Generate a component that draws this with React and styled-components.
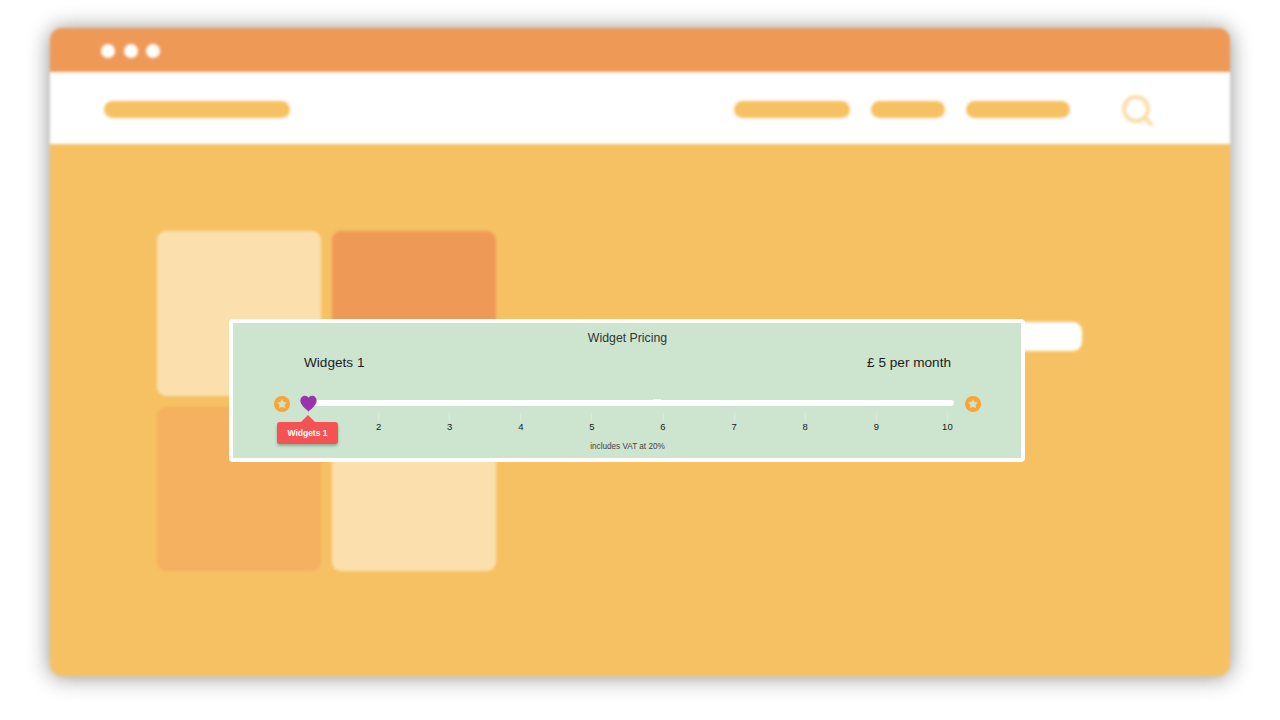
import React from 'react';
import styled, { createGlobalStyle } from 'styled-components';

const GlobalStyle = createGlobalStyle`
  html, body {
    margin: 0;
    padding: 0;
    background: #fff;
    font-family: "Liberation Sans", Arial, sans-serif;
  }
`;

const Stage = styled.div`
  position: relative;
  width: 1280px;
  height: 720px;
  padding: 28px 50px 44px;
  box-sizing: border-box;
  overflow: hidden;
`;

const BrowserMock = styled.div`
  display: flex;
  flex-direction: column;
  height: 100%;
  border-radius: 12px;
  overflow: hidden;
  background: #f6c162;
  box-shadow: 0 1px 22px rgba(0, 0, 0, 0.45);
  filter: blur(1.4px);
`;

const TitleBar = styled.div`
  display: flex;
  align-items: center;
  gap: 8.5px;
  height: 44px;
  box-sizing: border-box;
  padding: 2px 0 0 51px;
  background: #ef9957;
`;

const Dot = styled.span`
  width: 14px;
  height: 14px;
  border-radius: 50%;
  background: #fff;
`;

const NavBar = styled.div`
  display: flex;
  align-items: center;
  gap: 21px;
  height: 72px;
  box-sizing: border-box;
  padding: 3px 77px 0 54px;
  background: #fff;
`;

const NavPill = styled.span`
  width: ${(p) => p.$width}px;
  height: 17px;
  border-radius: 9px;
  background: #f6c162;
  &:first-child {
    margin-right: auto;
  }
`;

const SearchIcon = styled.svg`
  width: 32px;
  height: 32px;
  margin: 3px 0 0 30px;
  fill: none;
  stroke: #fbdca8;
  stroke-width: 4;
  stroke-linecap: round;
`;

const Content = styled.div`
  display: flex;
  flex: 1;
  gap: 36px;
  padding: 87px 148px 0 107px;
`;

const TileGrid = styled.div`
  display: grid;
  grid-template-columns: 164px 164px;
  grid-auto-rows: 164.5px;
  gap: 11px;
`;

const Tile = styled.div`
  border-radius: 9px;
  background: ${(p) => p.$color};
`;

const HeroPill = styled.div`
  flex: 1;
  height: 29px;
  margin-top: 91px;
  border-radius: 9px;
  background: #fff;
`;

const PricingPanel = styled.section`
  position: absolute;
  top: 319px;
  left: 229px;
  width: 796px;
  height: 143px;
  box-sizing: border-box;
  padding-top: 8px;
  border: 4px solid #fff;
  border-radius: 4px;
  background: #cde5cf;
  color: #222;
`;

const PanelTitle = styled.h2`
  margin: 0;
  padding-left: 1px;
  font-size: 12.3px;
  font-weight: 400;
  line-height: 14px;
  text-align: center;
  color: #333;
`;

const Summary = styled.div`
  display: flex;
  justify-content: space-between;
  margin-top: 9px;
  padding: 0 70px 0 71px;
  font-size: 13.6px;
  line-height: 18px;
  color: #1c1c1c;
`;

const SliderRow = styled.div`
  display: flex;
  align-items: center;
  margin-top: 24px;
  padding-left: 41px;
`;

const StarBadge = styled.svg`
  flex: none;
  width: 16px;
  height: 16px;
`;

const Track = styled.div`
  position: relative;
  width: 646px;
  height: 6px;
  margin: 0 11px 3px 18px;
  border-radius: 3px;
  background: #fff;
  &::after {
    content: '';
    position: absolute;
    top: -1px;
    left: 345px;
    width: 8px;
    height: 1px;
    background: #eef6ee;
  }
`;

const Thumb = styled.svg`
  position: absolute;
  top: -5px;
  left: -8px;
  width: 17px;
  height: 17px;
  fill: #9a33ae;
`;

const Bubble = styled.div`
  position: absolute;
  top: 22px;
  left: -31px;
  width: 61px;
  height: 22px;
  border-radius: 3px;
  background: #f55353;
  box-shadow: 0 2px 3px rgba(40, 90, 70, 0.4);
  font-size: 8.5px;
  font-weight: 700;
  line-height: 22px;
  text-align: center;
  color: #fff;
  &::before {
    content: '';
    position: absolute;
    top: -7px;
    left: 23.5px;
    border: 7px solid transparent;
    border-top: 0;
    border-bottom-color: #f55353;
  }
`;

const Scale = styled.div`
  display: flex;
  margin-top: 1px;
  padding: 0 38px 0 39px;
`;

const ScaleItem = styled.div`
  flex: 1;
  display: flex;
  flex-direction: column;
  align-items: center;
  height: 20px;
  font-size: 9.5px;
  line-height: 12px;
  color: #1a1a1a;
  &::before {
    content: '';
    width: 1px;
    height: 8px;
    background: ${(p) => (p.$covered ? 'transparent' : '#dceadc')};
  }
`;

const Footnote = styled.p`
  margin: 9px 0 0;
  padding-left: 1px;
  font-size: 8.2px;
  line-height: 10px;
  text-align: center;
  color: #444;
`;

const Star = () => (
  <StarBadge viewBox="0 0 16 16">
    <circle cx="8" cy="8" r="8" fill="#fca237" />
    <path
      d="M8 2.9l1.55 3.1 3.5.46-2.55 2.4.65 3.44L8 10.65l-3.15 1.65.65-3.44-2.55-2.4 3.5-.46z"
      fill="#cfe3c6"
    />
  </StarBadge>
);

// the first mark sits under the bubble, so only 2-10 are printed
const scale = ['', 2, 3, 4, 5, 6, 7, 8, 9, 10];

const App = () => (
  <Stage>
    <GlobalStyle />
    <BrowserMock>
      <TitleBar>
        <Dot />
        <Dot />
        <Dot />
      </TitleBar>
      <NavBar>
        <NavPill $width={186} />
        <NavPill $width={116} />
        <NavPill $width={74} />
        <NavPill $width={104} />
        <SearchIcon viewBox="0 0 32 32">
          <circle cx="15" cy="14" r="12" />
          <path d="M24 23l6 6" />
        </SearchIcon>
      </NavBar>
      <Content>
        <TileGrid>
          <Tile $color="#fbe0ae" />
          <Tile $color="#ef9957" />
          <Tile $color="#f5b060" />
          <Tile $color="#fbe0ae" />
        </TileGrid>
        <HeroPill />
      </Content>
    </BrowserMock>

    <PricingPanel>
      <PanelTitle>Widget Pricing</PanelTitle>
      <Summary>
        <span>Widgets 1</span>
        <span>£ 5 per month</span>
      </Summary>
      <SliderRow>
        <Star />
        <Track>
          <Thumb viewBox="0 0 24 24">
            <path d="M12 23.5C10.6 21.6 7.4 19.5 4.7 16.6 2.4 14.2 .5 11.3 .5 7.9 .5 3.9 3.5 1 7 1 9.1 1 11 2.1 12 4 13 2.1 14.9 1 17 1 20.5 1 23.5 3.9 23.5 7.9 23.5 11.3 21.6 14.2 19.3 16.6 16.6 19.5 13.4 21.6 12 23.5z" />
          </Thumb>
          <Bubble>Widgets 1</Bubble>
        </Track>
        <Star />
      </SliderRow>
      <Scale>
        {scale.map((n, i) => (
          <ScaleItem key={i} $covered={!n}>{n}</ScaleItem>
        ))}
      </Scale>
      <Footnote>includes VAT at 20%</Footnote>
    </PricingPanel>
  </Stage>
);

export default App;
